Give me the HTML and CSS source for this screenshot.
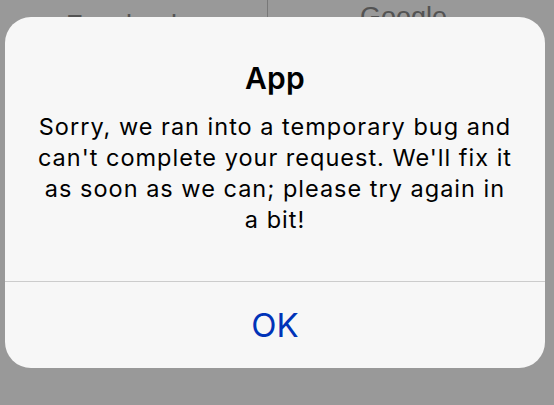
FILE: index.html
```html
<!DOCTYPE html>
<html>
<head>
<meta charset="utf-8">
<link rel="stylesheet" href="styles.css">
</head>
<body>
<div class="page">
  <div class="tabs">
    <div class="tab tab-left">Facebook</div>
    <div class="tab tab-right">Google</div>
  </div>
</div>
<div class="overlay"></div>
<div class="alert">
  <div class="alert-content">
    <div class="alert-title">App</div>
    <div class="alert-message">Sorry, we ran into a temporary bug and can't complete your request. We'll fix it as soon as we can; please try again in a bit!</div>
  </div>
  <div class="alert-actions">
    <div class="alert-button">OK</div>
  </div>
</div>
</body>
</html>
```

FILE: styles.css
```css
html, body {
  margin: 0;
  padding: 0;
  width: 554px;
  height: 405px;
  overflow: hidden;
  background: #ffffff;
  font-family: Inter, "Liberation Sans", Arial, sans-serif;
}

.page {
  height: 405px;
}

.tabs {
  display: flex;
  height: 60px;
}

.tab {
  flex: 1;
  font-size: 27px;
  color: #8a8a8a;
  padding-top: 10px;
  font-family: "Liberation Sans", Arial, sans-serif;
}

.tab-left {
  padding-left: 66px;
  border-right: 1px solid #c8c8c8;
  flex: 0 0 201px;
}

.tab-right {
  padding-left: 92px;
  padding-top: 2px;
}

.overlay {
  position: absolute;
  left: 0;
  top: 0;
  width: 554px;
  height: 405px;
  background: rgba(0, 0, 0, 0.4);
}

.alert {
  position: absolute;
  left: 5px;
  top: 17px;
  width: 540px;
  height: 351px;
  background: #f7f7f7;
  border-radius: 26px;
  display: flex;
  flex-direction: column;
}

.alert-content {
  flex: 1;
  padding: 43px 30px 0;
  text-align: center;
  color: #000;
}

.alert-title {
  font-size: 30px;
  font-weight: 600;
  line-height: 36px;
  letter-spacing: 0.3px;
}

.alert-message {
  margin-top: 15px;
  font-size: 23.5px;
  line-height: 31px;
  letter-spacing: 1px;
}

.alert-actions {
  height: 86px;
  border-top: 1px solid #cccccc;
  display: flex;
  align-items: center;
  justify-content: center;
}

.alert-button {
  font-size: 33px;
  color: #0033b8;
}
```
